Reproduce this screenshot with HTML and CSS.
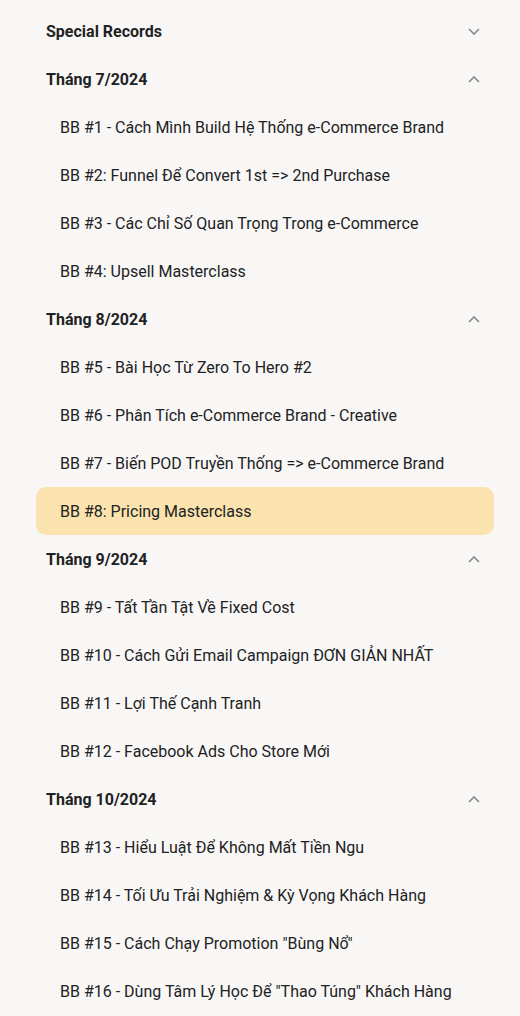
FILE: index.html
```html
<!DOCTYPE html>
<html lang="vi">
<head>
<meta charset="utf-8">
<link rel="stylesheet" href="styles.css">
</head>
<body>
<nav class="menu">
  <div class="section">
    <div class="header"><span>Special Records</span><svg class="chev" viewBox="0 0 12 7"><path d="M1 1l5 5 5-5"/></svg></div>
  </div>
  <div class="section">
    <div class="header"><span>Tháng 7/2024</span><svg class="chev" viewBox="0 0 12 7"><path d="M1 6l5-5 5 5"/></svg></div>
    <div class="item">BB #1 - Cách Mình Build Hệ Thống e-Commerce Brand</div>
    <div class="item">BB #2: Funnel Để Convert 1st =&gt; 2nd Purchase</div>
    <div class="item">BB #3 - Các Chỉ Số Quan Trọng Trong e-Commerce</div>
    <div class="item">BB #4: Upsell Masterclass</div>
  </div>
  <div class="section">
    <div class="header"><span>Tháng 8/2024</span><svg class="chev" viewBox="0 0 12 7"><path d="M1 6l5-5 5 5"/></svg></div>
    <div class="item">BB #5 - Bài Học Từ Zero To Hero #2</div>
    <div class="item">BB #6 - Phân Tích e-Commerce Brand - Creative</div>
    <div class="item">BB #7 - Biến POD Truyền Thống =&gt; e-Commerce Brand</div>
    <div class="item active">BB #8: Pricing Masterclass</div>
  </div>
  <div class="section">
    <div class="header"><span>Tháng 9/2024</span><svg class="chev" viewBox="0 0 12 7"><path d="M1 6l5-5 5 5"/></svg></div>
    <div class="item">BB #9 - Tất Tần Tật Về Fixed Cost</div>
    <div class="item">BB #10 - Cách Gửi Email Campaign ĐƠN GIẢN NHẤT</div>
    <div class="item">BB #11 - Lợi Thế Cạnh Tranh</div>
    <div class="item">BB #12 - Facebook Ads Cho Store Mới</div>
  </div>
  <div class="section">
    <div class="header"><span>Tháng 10/2024</span><svg class="chev" viewBox="0 0 12 7"><path d="M1 6l5-5 5 5"/></svg></div>
    <div class="item">BB #13 - Hiểu Luật Để Không Mất Tiền Ngu</div>
    <div class="item">BB #14 - Tối Ưu Trải Nghiệm &amp; Kỳ Vọng Khách Hàng</div>
    <div class="item">BB #15 - Cách Chạy Promotion "Bùng Nổ"</div>
    <div class="item">BB #16 - Dùng Tâm Lý Học Để "Thao Túng" Khách Hàng</div>
  </div>
</nav>
</body>
</html>
```
FILE: styles.css
```css
html, body {
  margin: 0;
  padding: 0;
  background: #f8f7f6;
}
body {
  font-family: Roboto, "Noto Sans", sans-serif;
  color: #222222;
  overflow: hidden;
}
.menu {
  margin: 7px 26px 0 36px;
  display: flex;
  flex-direction: column;
}
.section {
  display: flex;
  flex-direction: column;
}
.header {
  height: 48px;
  display: flex;
  align-items: center;
  justify-content: space-between;
  padding: 0 14px 0 10px;
  font-size: 16px;
  font-weight: 700;
}
.chev {
  width: 12px;
  height: 7px;
  fill: none;
  stroke: #888888;
  stroke-width: 1.6;
}
.item {
  height: 48px;
  display: flex;
  align-items: center;
  padding-left: 24px;
  font-size: 16px;
  border-radius: 10px;
}
.item.active {
  background: #fae3ae;
}
```
